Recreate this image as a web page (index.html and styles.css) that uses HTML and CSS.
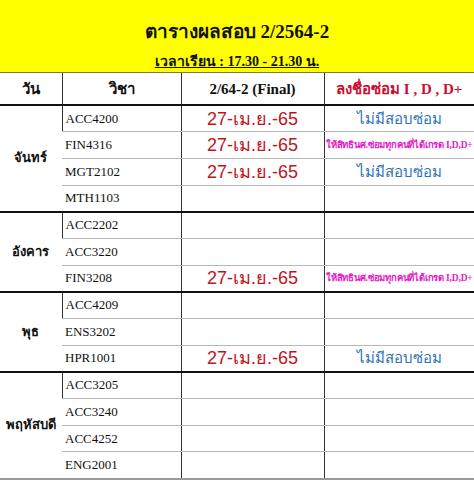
FILE: index.html
```html
<!DOCTYPE html>
<html lang="th">
<head>
<meta charset="utf-8">
<link rel="stylesheet" href="styles.css">
</head>
<body>
<div class="banner">
  <div class="title">ตารางผลสอบ 2/2564-2</div>
  <div class="subtitle">เวลาเรียน : 17.30 - 21.30 น.</div>
</div>
<table class="grid">
  <colgroup><col class="c1"><col class="c2"><col class="c3"><col class="c4"></colgroup>
  <thead>
    <tr class="head"><th>วัน</th><th>วิชา</th><th>2/64-2 (Final)</th><th class="red">ลงชื่อซ่อม I , D , D+</th></tr>
  </thead>
  <tbody class="grp">
    <tr><td class="day" rowspan="4">จันทร์</td><td class="code">ACC4200</td><td class="date">27-เม.ย.-65</td><td class="none">ไม่มีสอบซ่อม</td></tr>
    <tr><td class="code">FIN4316</td><td class="date">27-เม.ย.-65</td><td class="pink">ให้สิทธินศ.ซ่อมทุกคนที่ได้เกรด I,D,D+</td></tr>
    <tr><td class="code">MGT2102</td><td class="date">27-เม.ย.-65</td><td class="none">ไม่มีสอบซ่อม</td></tr>
    <tr><td class="code">MTH1103</td><td></td><td></td></tr>
  </tbody>
  <tbody class="grp">
    <tr><td class="day" rowspan="3">อังคาร</td><td class="code">ACC2202</td><td></td><td></td></tr>
    <tr><td class="code">ACC3220</td><td></td><td></td></tr>
    <tr><td class="code">FIN3208</td><td class="date">27-เม.ย.-65</td><td class="pink">ให้สิทธินศ.ซ่อมทุกคนที่ได้เกรด I,D,D+</td></tr>
  </tbody>
  <tbody class="grp">
    <tr><td class="day" rowspan="3">พุธ</td><td class="code">ACC4209</td><td></td><td></td></tr>
    <tr><td class="code">ENS3202</td><td></td><td></td></tr>
    <tr><td class="code">HPR1001</td><td class="date">27-เม.ย.-65</td><td class="none">ไม่มีสอบซ่อม</td></tr>
  </tbody>
  <tbody class="grp last">
    <tr><td class="day" rowspan="4">พฤหัสบดี</td><td class="code">ACC3205</td><td></td><td></td></tr>
    <tr><td class="code">ACC3240</td><td></td><td></td></tr>
    <tr><td class="code">ACC4252</td><td></td><td></td></tr>
    <tr><td class="code">ENG2001</td><td></td><td></td></tr>
  </tbody>
</table>
</body>
</html>
```
FILE: styles.css
```css
html, body {
  margin: 0;
  padding: 0;
  background: #fff;
}
body {
  width: 474px;
  height: 480px;
  font-family: "Liberation Serif", "DejaVu Serif", serif;
  color: #111;
  overflow: hidden;
}
.banner {
  background: #ffff00;
  height: 73px;
  box-sizing: border-box;
  padding-top: 19px;
  text-align: center;
  border-bottom: 1px solid #7a7a55;
}
.title {
  font-weight: bold;
  font-size: 19px;
  line-height: 26px;
}
.subtitle {
  font-weight: bold;
  font-size: 14px;
  line-height: 18px;
  margin-top: 8px;
  text-decoration: underline;
}
.grid {
  width: 474px;
  border-collapse: collapse;
  table-layout: fixed;
}
.c1 { width: 62px; }
.c2 { width: 119px; }
.c3 { width: 143px; }
.c4 { width: 150px; }
.head { height: 32px; }
.grid th {
  font-size: 15px;
  line-height: 18px;
  font-weight: bold;
  padding: 0;
  border-left: 1px solid #333;
  border-bottom: 2px solid #111;
  text-align: center;
}
.grid th:first-child { border-left: none; }
.grid .red { color: #c8102e; }
.grid tbody tr { height: 26.7px; }
.grid td {
  padding: 0;
  line-height: 16px;
  border-left: 1px solid #333;
  border-bottom: 1px solid #b8b8b8;
  text-align: center;
  white-space: nowrap;
  overflow: hidden;
}
.grid td:first-child { border-left: none; }
.grp tr:last-child td,
.grid td.day { border-bottom: 2px solid #111; }
.last tr:last-child td,
.last td.day { border-bottom: 2px solid #9a9a9a; }
.day {
  font-weight: bold;
  font-size: 13px;
}
.grid td.code {
  text-align: left;
  padding-left: 3px;
  font-size: 13px;
}
.date {
  font-family: "Liberation Sans", "DejaVu Sans", sans-serif;
  color: #c0141c;
  font-size: 18px;
}
.none {
  font-family: "Liberation Sans", "DejaVu Sans", sans-serif;
  color: #2e74b5;
  font-size: 15px;
}
.pink {
  color: #e21bc8;
  font-weight: bold;
  font-size: 9.5px;
  letter-spacing: -0.2px;
}
```
